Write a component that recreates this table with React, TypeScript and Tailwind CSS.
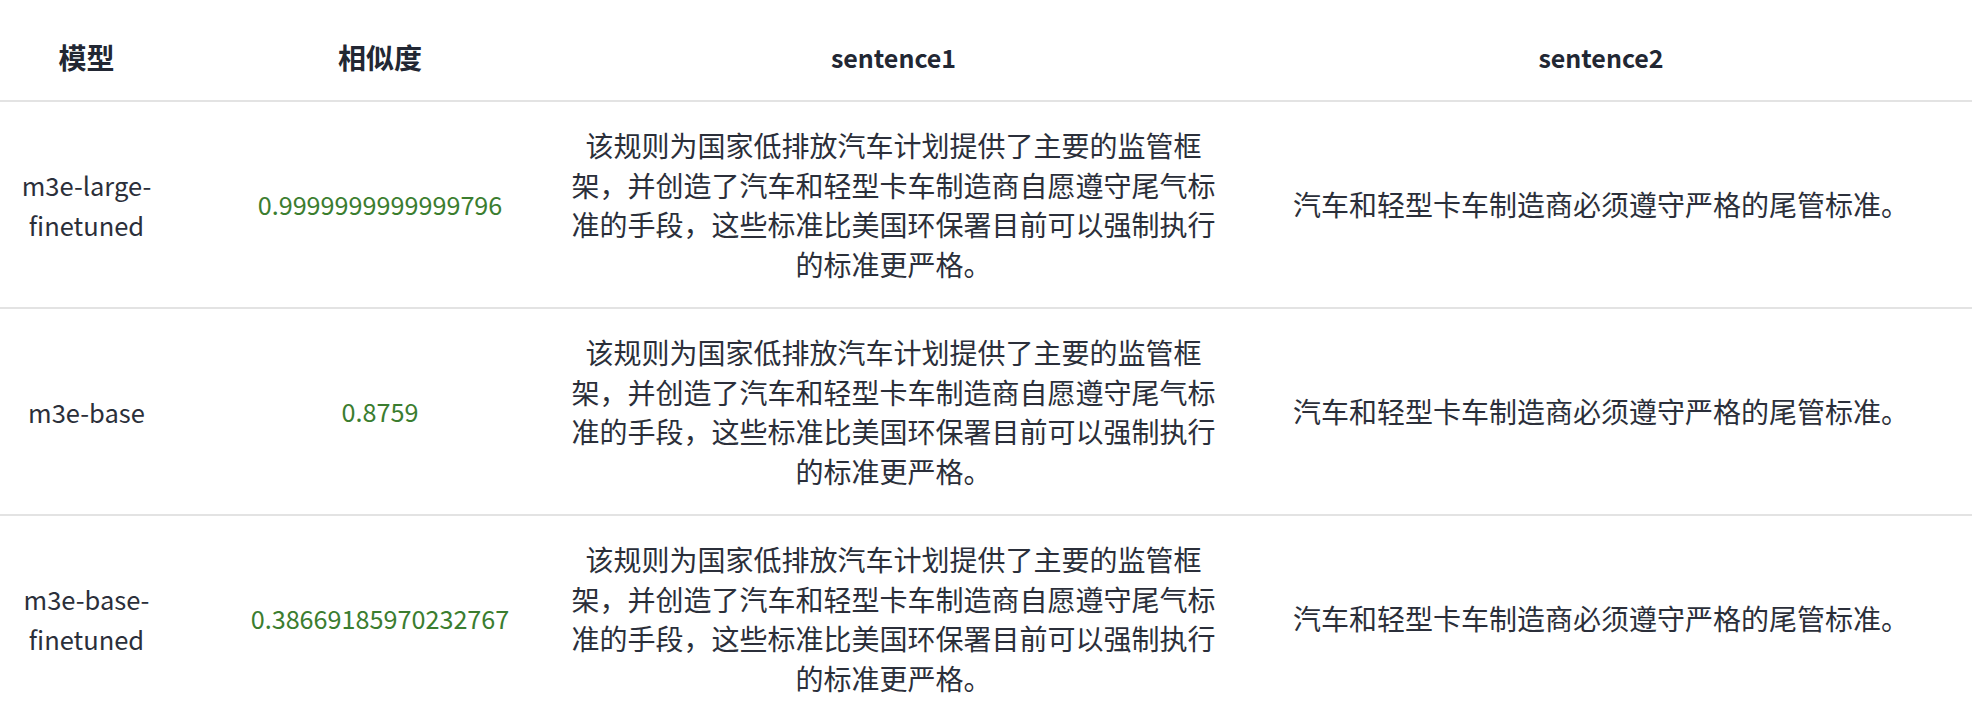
import React from "react";

type Row = {
  model: string;
  score: string;
  sentence1: string;
  sentence2: string;
};

const SENTENCE1 =
  "该规则为国家低排放汽车计划提供了主要的监管框架，并创造了汽车和轻型卡车制造商自愿遵守尾气标准的手段，这些标准比美国环保署目前可以强制执行的标准更严格。";
const SENTENCE2 = "汽车和轻型卡车制造商必须遵守严格的尾管标准。";

const rows: Row[] = [
  { model: "m3e-large-finetuned", score: "0.9999999999999796", sentence1: SENTENCE1, sentence2: SENTENCE2 },
  { model: "m3e-base", score: "0.8759", sentence1: SENTENCE1, sentence2: SENTENCE2 },
  { model: "m3e-base-finetuned", score: "0.38669185970232767", sentence1: SENTENCE1, sentence2: SENTENCE2 },
];

const gridCols = "grid grid-cols-[193px_374px_653px_752px]";

export default function App() {
  return (
    <div
      className="min-h-screen w-full overflow-hidden bg-white text-[28px] leading-[39.5px] text-[#2b2f3a]"
      style={{ fontFamily: '"Noto Sans CJK SC", "Noto Sans", sans-serif' }}
    >
      {/* header */}
      <div className={`${gridCols} h-[102px] border-b-2 border-[#e3e3e3] font-bold text-[#222733]`}>
        <div className="pl-[12px] pr-[32px] pt-[38px] text-center">模型</div>
        <div className="pt-[38px] text-center">相似度</div>
        <div className="pt-[38px] text-center text-[25px]">sentence1</div>
        <div className="pl-[10px] pt-[38px] text-center text-[25px]">sentence2</div>
      </div>

      {rows.map((row) => (
        <div key={row.model} className={`${gridCols} border-b-2 border-[#e3e3e3]`}>
          <div className="flex items-center justify-center pl-[12px] pr-[32px] text-center text-[25.5px]">
            <span className="break-words">{row.model}</span>
          </div>
          <div className="flex items-center justify-center text-center text-[25.2px] text-[#3b7d2f]">
            {row.score}
          </div>
          <div className="pt-[24px] pb-[23px] text-center">{row.sentence1}</div>
          <div className="flex items-center justify-center pl-[10px] text-center">{row.sentence2}</div>
        </div>
      ))}
    </div>
  );
}
